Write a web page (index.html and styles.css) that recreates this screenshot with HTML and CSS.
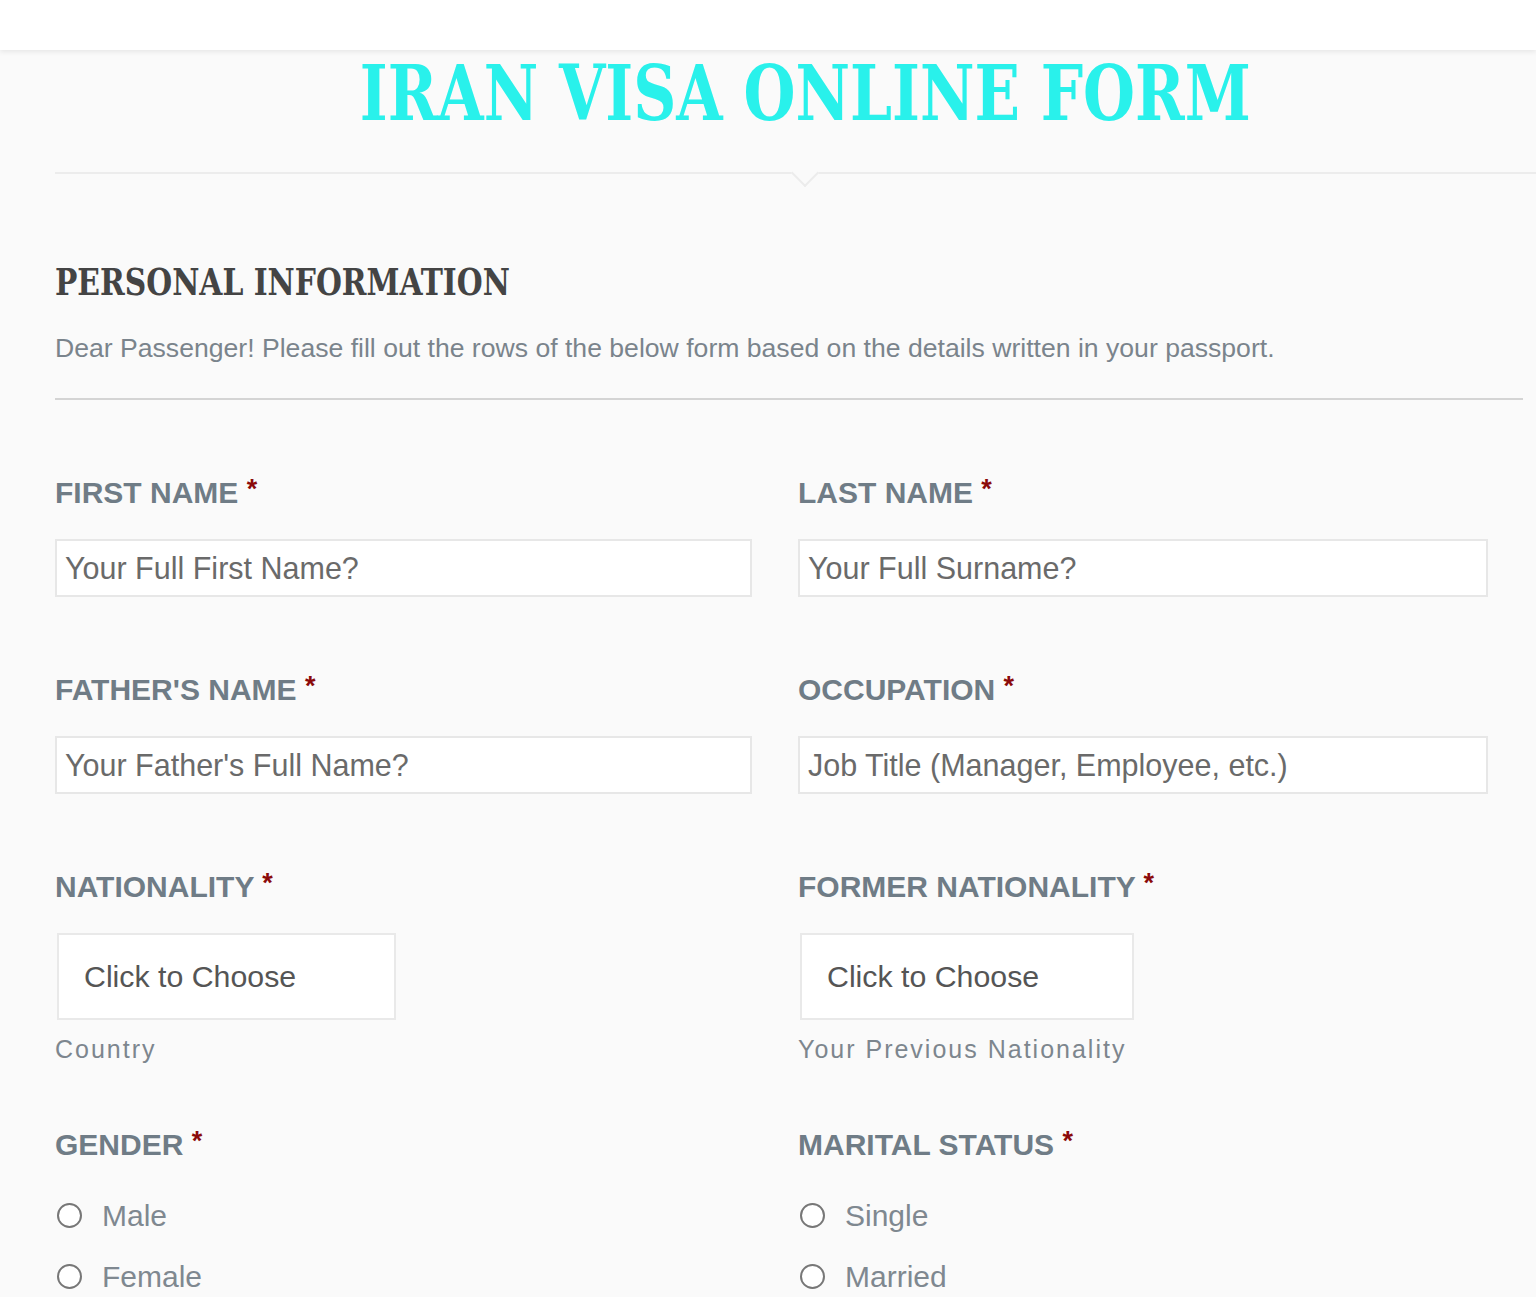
FILE: index.html
```
<!DOCTYPE html>
<html lang="en">
<head>
  <meta charset="UTF-8">
  <title>Iran Visa Online Form</title>
  <link rel="stylesheet" href="styles.css">
</head>
<body>
  <div class="topbar"></div>

  <div class="page">
    <h1 class="title"><span>IRAN VISA ONLINE FORM</span></h1>
    <div class="divider"><span class="notch"></span></div>

    <div class="section">
      <h2><span>PERSONAL INFORMATION</span></h2>
      <p class="intro">Dear Passenger! Please fill out the rows of the below form based on the details written in your passport.</p>
    </div>

    <div class="form">
      <div class="field">
        <label>FIRST NAME <span class="req">*</span></label>
        <input type="text" placeholder="Your Full First Name?">
      </div>
      <div class="field">
        <label>LAST NAME <span class="req">*</span></label>
        <input type="text" placeholder="Your Full Surname?">
      </div>

      <div class="field">
        <label>FATHER'S NAME <span class="req">*</span></label>
        <input type="text" placeholder="Your Father's Full Name?">
      </div>
      <div class="field">
        <label>OCCUPATION <span class="req">*</span></label>
        <input type="text" placeholder="Job Title (Manager, Employee, etc.)">
      </div>

      <div class="field select-field">
        <label>NATIONALITY <span class="req">*</span></label>
        <div class="choose choose-left">Click to Choose</div>
        <div class="hint">Country</div>
      </div>
      <div class="field select-field">
        <label>FORMER NATIONALITY <span class="req">*</span></label>
        <div class="choose choose-right">Click to Choose</div>
        <div class="hint">Your Previous Nationality</div>
      </div>

      <div class="field radios">
        <label>GENDER <span class="req">*</span></label>
        <div class="radio"><span class="dot"></span>Male</div>
        <div class="radio"><span class="dot"></span>Female</div>
      </div>
      <div class="field radios">
        <label>MARITAL STATUS <span class="req">*</span></label>
        <div class="radio"><span class="dot"></span>Single</div>
        <div class="radio"><span class="dot"></span>Married</div>
      </div>
    </div>
  </div>
</body>
</html>
```

FILE: styles.css
```
html, body {
  margin: 0;
  padding: 0;
  overflow: hidden;
}
body {
  background-color: #fafafa;
  font-family: "Liberation Sans", Arial, sans-serif;
  width: 1536px;
  height: 1297px;
}

.topbar {
  height: 50px;
  background: #fff;
  box-shadow: 0 2px 5px rgba(0,0,0,0.08);
  position: relative;
  z-index: 2;
}

.page {
  margin-left: 55px;
  width: 1500px;
}

.title {
  margin: 0;
  text-align: center;
  font-family: "DejaVu Serif Condensed", "DejaVu Serif", serif;
  font-stretch: condensed;
  font-weight: bold;
  font-size: 76px;
  line-height: 88px;
  color: #29f1eb;
}
.title span {
  display: inline-block;
  transform: scaleX(0.873);
}

.divider {
  margin-top: 34px;
  height: 2px;
  background: #ececec;
  position: relative;
}
.notch {
  position: absolute;
  left: 740px;
  top: -9px;
  width: 18px;
  height: 18px;
  background: #fafafa;
  border-right: 2px solid #ececec;
  border-bottom: 2px solid #ececec;
  transform: rotate(45deg);
}

.section {
  width: 1468px;
  border-bottom: 2px solid #d4d4d4;
  padding-top: 86px;
  padding-bottom: 34px;
}
.section h2 {
  margin: 0;
  font-family: "DejaVu Serif Condensed", "DejaVu Serif", serif;
  font-stretch: condensed;
  font-weight: bold;
  font-size: 38px;
  line-height: 44px;
  color: #444;
}
.section h2 span {
  display: inline-block;
  transform: scaleX(0.87);
  transform-origin: left center;
}
.section .intro {
  margin: 28px 0 0;
  font-size: 26.6px;
  line-height: 32px;
  color: #7a848c;
}

.form {
  display: grid;
  grid-template-columns: 697px 690px;
  column-gap: 46px;
  padding-top: 71px;
}

.field {
  margin-bottom: 71px;
}
.field label {
  display: block;
  font-size: 30px;
  font-weight: bold;
  line-height: 36px;
  color: #6f7c86;
  margin-bottom: 28px;
}
.req {
  color: #8b0a0a;
  font-size: 27px;
  vertical-align: 5px;
}

.field input {
  display: block;
  box-sizing: border-box;
  width: 100%;
  height: 58px;
  margin: 0;
  padding: 0 8px;
  border: 2px solid #e7e7e7;
  background: #fff;
  font-family: "Liberation Sans", Arial, sans-serif;
  font-size: 30.5px;
  color: #666;
  outline: none;
}
.field input::placeholder {
  color: #6a6a6a;
}

.select-field {
  margin-bottom: 59px;
}
.choose {
  box-sizing: border-box;
  height: 87px;
  margin-left: 2px;
  border: 2px solid #e9e9e9;
  background: #fff;
  font-size: 30.3px;
  color: #555;
  line-height: 83px;
  padding-left: 25px;
}
.choose-left { width: 339px; }
.choose-right { width: 334px; }

.hint {
  margin-top: 15px;
  font-size: 25px;
  letter-spacing: 2px;
  color: #7d868e;
}

.radios {
  margin-bottom: 0;
}
.radios label {
  margin-bottom: 22px;
}
.radio {
  display: flex;
  align-items: center;
  height: 61px;
  font-size: 30px;
  color: #7f8890;
}
.dot {
  width: 21px;
  height: 21px;
  border: 2px solid #777;
  border-radius: 50%;
  margin-left: 2px;
  margin-right: 20px;
  background: #fff;
}
```
